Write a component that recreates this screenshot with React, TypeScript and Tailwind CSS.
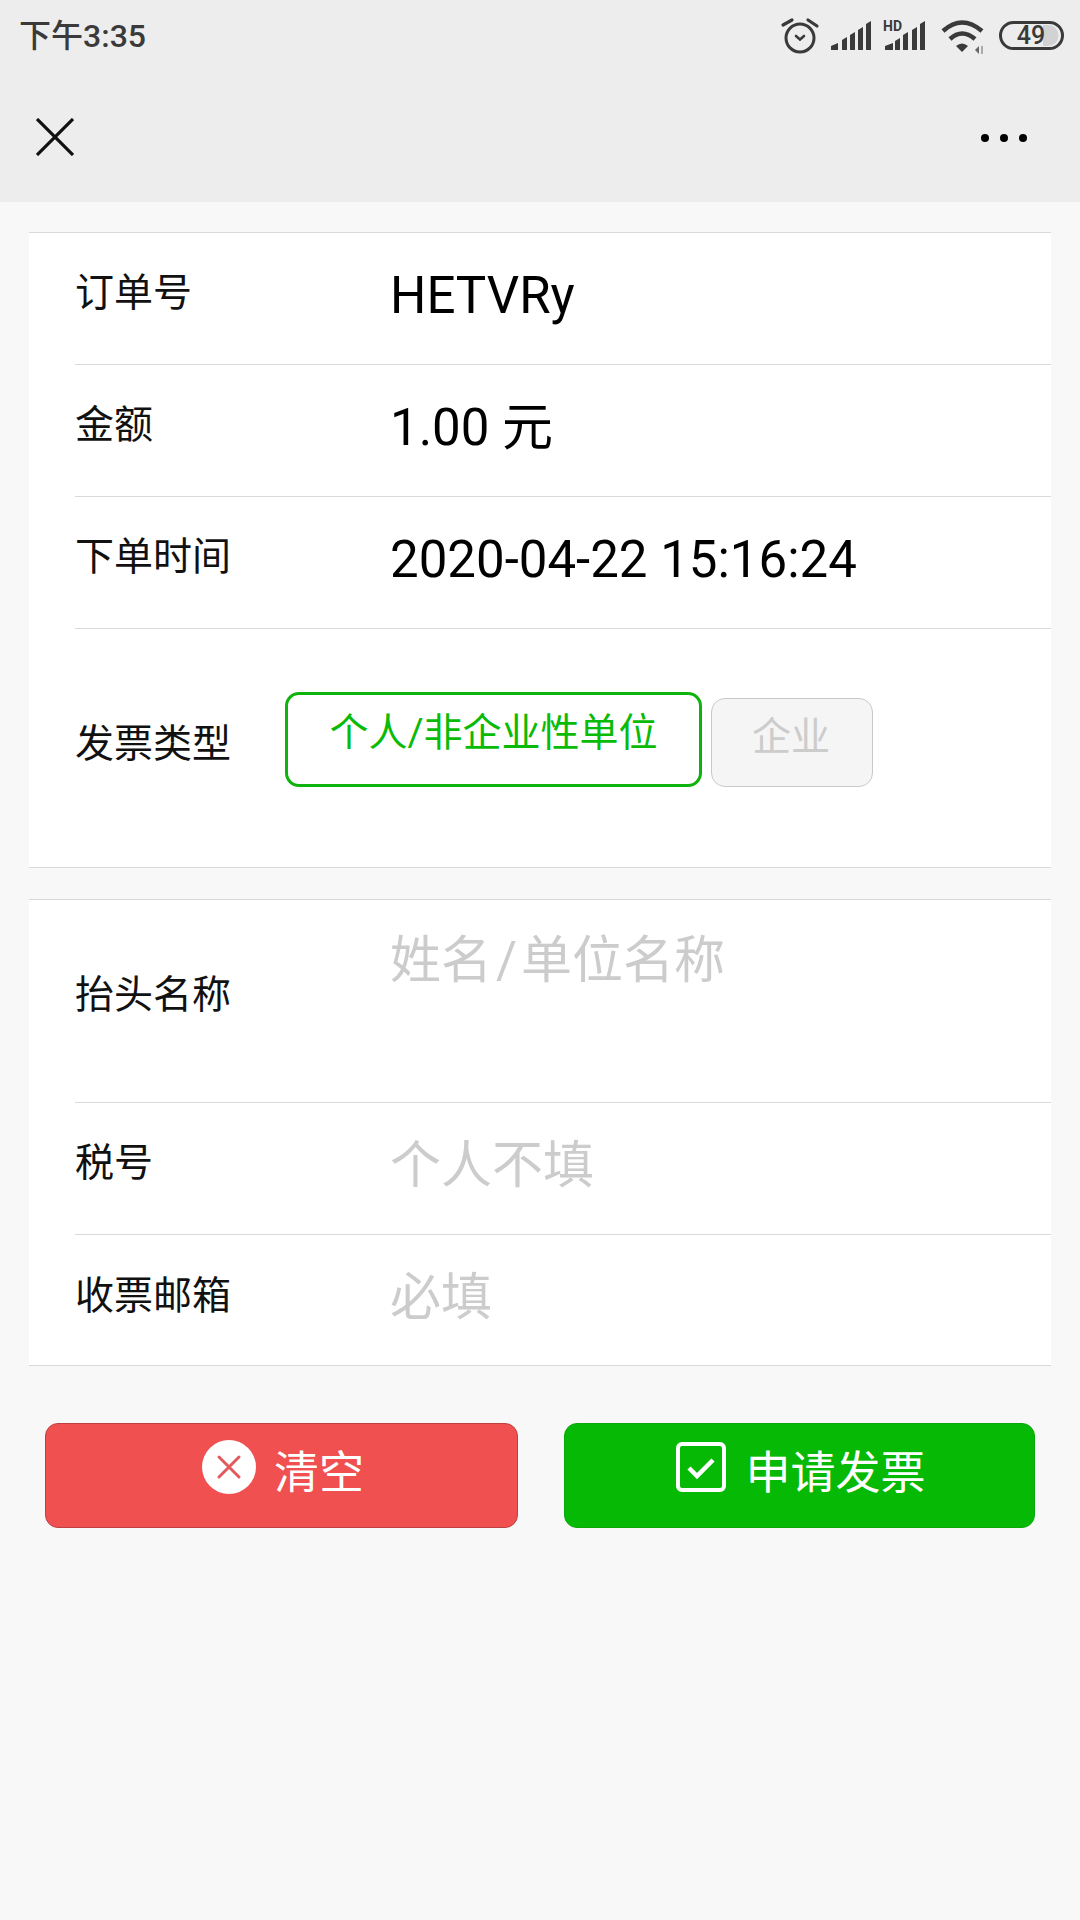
import React from "react";

const font = { fontFamily: "Roboto, 'Noto Sans CJK SC', sans-serif" };

function Row({ label, value, placeholder, h = "h-[132px]", last }: { label: string; value?: string; placeholder?: string; h?: string; last?: boolean }) {
  return (
    <div className={`ml-[46px] ${h} flex items-center ${last ? "" : "border-b border-[#d9d9d9]"}`}>
      <div className={`w-[315px] shrink-0 text-[39px] leading-[50px] text-[#111] ${last ? "-mt-[8px]" : "-mt-[12px]"}`}>{label}</div>
      {value ? (
        <div className="text-[51px] leading-[60px] text-black -mt-[6px]">{value}</div>
      ) : (
        <div className={`text-[51px] leading-[60px] text-[#cccccc] ${last ? "-mt-[4px]" : "-mt-[6px]"}`}>{placeholder}</div>
      )}
    </div>
  );
}

const INK = "#3a3a3a";

function Bars({ bars }: { bars: [number, number, number][] }) {
  return (
    <>
      {bars.map(([x1, x2, top]) => (
        <path key={x1} d={`M${x1} 50 L${x1} ${top + 3} L${x2} ${top} L${x2} 50 Z`} fill={INK} />
      ))}
    </>
  );
}

function StatusIcons() {
  return (
    <svg width="300" height="72" viewBox="770 0 300 72">
      <g fill="none" stroke={INK} strokeLinecap="round">
        <circle cx="800" cy="38" r="14" strokeWidth="3" />
        <path d="M783 25 L792 20 M808 20 L817 26" strokeWidth="3.2" />
        <path d="M796 36 L800 39.5 L804 36" strokeWidth="2.6" />
      </g>
      <Bars bars={[[831, 838, 43], [842, 847, 37], [850, 855, 32], [858, 863, 27], [866, 871, 21]]} />
      <Bars bars={[[885, 893, 43], [895, 900, 38], [903, 908, 32], [912, 917, 27], [920, 925, 21]]} />
      <text x="883" y="31" fontSize="14" fontWeight="700" fill={INK}>HD</text>
      <g fill="none" stroke={INK} strokeWidth="4.5">
        <path d="M943 31 Q962 14 982 31" />
        <path d="M950 39 Q962 28 975 39" />
      </g>
      <path d="M956 46 Q962 41 968 46 L962 52 Z" fill={INK} />
      <path d="M975 50 L979 46 L979 54 Z" fill="#666" />
      <path d="M981 46 L983 46 L983 54 L981 54 Z" fill="#aaa" />
      <path d="M1043 25 L1048 25 A10.5 10.5 0 0 1 1048 46 L1043 46 Z" fill="#d2d2d2" />
      <rect x="1000.5" y="22.5" width="62" height="26" rx="13" fill="none" stroke={INK} strokeWidth="3" />
      <text x="1031" y="44" textAnchor="middle" fontSize="25" fontWeight="500" fill={INK}>49</text>
    </svg>
  );
}

export default function App() {
  return (
    <div className="w-[1080px] h-[1920px] bg-[#f8f8f8] overflow-hidden" style={font}>
      <div className="h-[202px] bg-[#ededed]">
        <div className="h-[72px] flex items-center justify-between pl-[19px] pr-[10px]">
          <div className="text-[32px] text-[#3a3a3a] leading-[72px] font-medium">下午3:35</div>
          <StatusIcons />
        </div>
        <div className="h-[130px] flex items-center justify-between pl-[36px] pr-[53px]">
          <svg width="38" height="38" viewBox="0 0 38 38">
            <path d="M1 1 L37 37 M37 1 L1 37" stroke="#111" strokeWidth="3.2" fill="none" />
          </svg>
          <div className="flex gap-[11px] mt-[2px]">
            <div className="w-[8px] h-[8px] rounded-full bg-black" />
            <div className="w-[8px] h-[8px] rounded-full bg-black" />
            <div className="w-[8px] h-[8px] rounded-full bg-black" />
          </div>
        </div>
      </div>

      <div className="pt-[30px] pl-[29px] w-[1051px]">
        <div className="bg-white border-y border-[#d9d9d9]">
          <Row label="订单号" value="HETVRy" />
          <Row label="金额" value="1.00 元" />
          <Row label="下单时间" value="2020-04-22 15:16:24" />
          <div className="ml-[46px] h-[238px] flex items-start">
            <div className="w-[210px] shrink-0 text-[39px] leading-[50px] text-[#111] mt-[90px]">发票类型</div>
            <div className="mt-[63px] w-[417px] h-[95px] rounded-[14px] border-[3px] border-[#0fb30d] bg-white text-center text-[39px] leading-[77px] text-[#09bb07]">
              个人/非企业性单位
            </div>
            <div className="ml-[9px] mt-[69px] w-[162px] h-[89px] rounded-[14px] border border-[#c9c9c9] bg-[#f5f5f5] text-center text-[39px] leading-[77px] text-[#cccccc] pr-[2px]">
              企业
            </div>
          </div>
        </div>

        <div className="mt-[31px] bg-white border-y border-[#d9d9d9]">
          <div className="ml-[46px] h-[203px] flex items-start border-b border-[#d9d9d9]">
            <div className="w-[315px] shrink-0 text-[39px] leading-[50px] text-[#111] mt-[70px]">抬头名称</div>
            <div className="text-[51px] leading-[60px] text-[#cccccc] mt-[31px] whitespace-nowrap">
              姓名<span className="mx-[4px]">/</span>单位名称
            </div>
          </div>
          <Row label="税号" placeholder="个人不填" />
          <Row label="收票邮箱" placeholder="必填" h="h-[130px]" last />
        </div>
      </div>

      <div className="mt-[57px] pl-[45px] flex gap-[46px]">
        <div className="w-[473px] h-[105px] rounded-[13px] bg-[#f05050] border border-[#bc4141] flex items-center justify-center text-white pl-[3px]">
          <svg width="54" height="54" viewBox="0 0 54 54" className="-mt-[17px]">
            <circle cx="27" cy="27" r="27" fill="#fff" />
            <path d="M17 17 L37 37 M37 17 L17 37" stroke="#e35a5e" strokeWidth="3" strokeLinecap="round" />
          </svg>
          <div className="ml-[18px] text-[45px] leading-[60px] -mt-[3px]">清空</div>
        </div>
        <div className="w-[471px] h-[105px] rounded-[13px] bg-[#05b905] border border-[#0aa80a] flex items-center justify-center text-white pl-[3px]">
          <svg width="50" height="50" viewBox="0 0 50 50" className="-mt-[17px]">
            <rect x="2" y="2" width="46" height="46" rx="4" fill="none" stroke="#fff" strokeWidth="4" />
            <path d="M13 26 L21 34 L37 18" fill="none" stroke="#fff" strokeWidth="4.5" />
          </svg>
          <div className="ml-[19px] text-[45px] leading-[60px] -mt-[3px]">申请发票</div>
        </div>
      </div>
    </div>
  );
}
